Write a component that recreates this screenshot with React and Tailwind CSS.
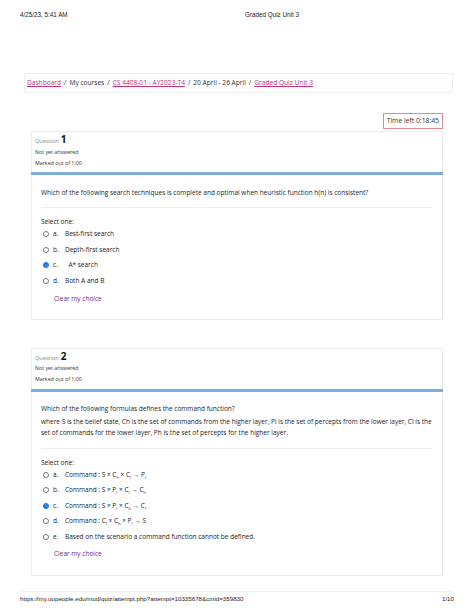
import React from 'react';

const sans = { fontFamily: '"Open Sans", "Noto Sans", sans-serif' };
const arial = { fontFamily: '"Liberation Sans", Arial, sans-serif' };

const Radio = ({ checked }) =>
  checked ? (
    <span className="w-[6px] h-[6px] rounded-full border border-[#1a73e8] bg-[#1a73e8] inline-flex items-center justify-center">
      <span className="w-[3px] h-[3px] rounded-full bg-[#3b8bf0]" />
    </span>
  ) : (
    <span className="w-[6px] h-[6px] rounded-full border border-[#7a7a7a] bg-white inline-block" />
  );

const Option = ({ letter, checked, children }) => (
  <div className="flex items-center h-[15.5px] text-[6.5px] text-[#222]">
    <span className="w-[10px] flex justify-center"><Radio checked={checked} /></span>
    <span className="w-[14px] pl-[2px]">{letter}.</span>
    <span>{children}</span>
  </div>
);

const Sub = ({ children }) => <sub className="text-[4px] align-[-1px]">{children}</sub>;

const QuestionCard = ({ number, children, options, clearOffset, bottom }) => (
  <div className="ml-[31px] w-[412px] border border-[#ececec] bg-white" style={sans}>
    <div className="pl-[3px] pt-[2px] pb-[3px]">
      <div className="flex items-baseline h-[13px]">
        <span className="text-[5.6px] text-[#888] mr-[2px]">Question</span>
        <span className="text-[10px] font-bold text-[#111] leading-none">{number}</span>
      </div>
      <div className="text-[5.3px] text-[#333] h-[11px] flex items-center">Not yet answered</div>
      <div className="text-[5.3px] text-[#333] h-[11px] flex items-center">Marked out of 1:00</div>
    </div>
    <div className="h-[3px] bg-[#7eaed6] -mx-px" />
    <div className={`px-[9px] pt-[11.5px] ${bottom}`}>
      <div className="text-[6.5px] text-[#1d1d1d] leading-[11px]">{children}</div>
      <div className="h-px bg-[#eeeeee] mt-[9.5px] mb-[9.5px]" />
      <div className="text-[6.5px] text-[#222] h-[9px] flex items-center">Select one:</div>
      <div>{options}</div>
      <div className={`text-[6.5px] leading-[11px] text-[#6f2a8c] pl-[13px] ${clearOffset}`}>Clear my choice</div>
    </div>
  </div>
);

export default function App() {
  return (
    <div className="w-[474px] h-[613px] bg-white overflow-hidden">
      <div className="flex h-[30px] items-center px-[20px] text-[6.3px] text-[#222]" style={arial}>
        <span className="w-[225px]">4/25/23, 5:41 AM</span>
        <span>Graded Quiz Unit 3</span>
      </div>

      <div className="mt-[43px] ml-[24px] w-[429px] h-[20px] border border-[#eef0f2] bg-[#fdfdfd] flex items-center pl-[2px] text-[6.6px] text-[#333]" style={sans}>
        <span className="text-[#c0357a] underline">Dashboard</span>
        <span className="mx-[3px]">/</span>
        <span>My courses</span>
        <span className="mx-[3px]">/</span>
        <span className="text-[#c0357a] underline">CS 4408-01 - AY2023-T4</span>
        <span className="mx-[3px]">/</span>
        <span>20 April - 26 April</span>
        <span className="mx-[3px]">/</span>
        <span className="text-[#c0357a] underline">Graded Quiz Unit 3</span>
      </div>

      <div className="flex justify-end mr-[31px] mt-[20px]">
        <div className="border border-[#e08a94] h-[16px] px-[3px] flex items-center text-[6.8px] text-[#333]" style={sans}>
          Time left 0:18:45
        </div>
      </div>

      <div className="mt-[2px]">
        <QuestionCard
          number="1"
          clearOffset="mt-[4px]"
          bottom="pb-[15px]"
          options={
            <>
              <Option letter="a">Best-first search</Option>
              <Option letter="b">Depth-first search</Option>
              <Option letter="c" checked>&nbsp;&nbsp;A* search</Option>
              <Option letter="d">Both A and B</Option>
            </>
          }
        >
          Which of the following search techniques is complete and optimal when heuristic function h(n) is consistent?
        </QuestionCard>
      </div>

      <div className="mt-[28px]">
        <QuestionCard
          number="2"
          clearOffset="mt-[3.5px]"
          bottom="pb-[16px]"
          options={
            <>
              <Option letter="a">Command : S × C<Sub>h</Sub> × C<Sub>l</Sub> → P<Sub>l</Sub></Option>
              <Option letter="b">Command : S × P<Sub>l</Sub> × C<Sub>l</Sub> → C<Sub>h</Sub></Option>
              <Option letter="c" checked>Command : S × P<Sub>l</Sub> × C<Sub>h</Sub> → C<Sub>l</Sub></Option>
              <Option letter="d">Command : C<Sub>l</Sub> × C<Sub>h</Sub> × P<Sub>l</Sub> → S</Option>
              <Option letter="e">Based on the scenario a command function cannot be defined.</Option>
            </>
          }
        >
          <div className="mb-[2px]">Which of the following formulas defines the command function?</div>
          <div>
            where S is the belief state, Ch is the set of commands from the higher layer, Pl is the set of percepts from the lower layer, Cl is the set of commands for the lower layer, Ph is the set of percepts for the higher layer.
          </div>
        </QuestionCard>
      </div>

      <div className="mt-[15px] mx-[20px] border-t border-[#f0f0f0] flex justify-between items-center h-[14px] text-[6.2px] text-[#222]" style={arial}>
        <span>https://my.uopeople.edu/mod/quiz/attempt.php?attempt=10335678&amp;cmid=359830</span>
        <span>1/10</span>
      </div>
    </div>
  );
}
